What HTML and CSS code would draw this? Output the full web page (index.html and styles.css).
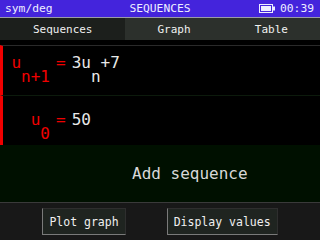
FILE: index.html
```html
<!DOCTYPE html>
<html>
<head>
<meta charset="utf-8">
<link rel="stylesheet" href="styles.css">
</head>
<body>
<div class="screen">
  <div class="status">
    <span class="mode">sym/deg</span>
    <span class="title">SEQUENCES</span>
    <span class="right">
      <svg class="battery" width="16" height="9" viewBox="0 0 16 9">
        <rect x="0.5" y="0.5" width="13" height="8" fill="none" stroke="#eeeeff" stroke-width="1"/>
        <rect x="2" y="2" width="10" height="5" fill="#eeeeff"/>
        <rect x="14" y="2.5" width="2" height="4" fill="#eeeeff"/>
      </svg>
      <span class="time">00:39</span>
    </span>
  </div>
  <div class="tabs">
    <div class="tab active">Sequences</div>
    <div class="tab">Graph</div>
    <div class="tab">Table</div>
  </div>
  <div class="list">
    <div class="row first">
      <div class="lhs red">u<span class="sub">n+1</span></div>
      <div class="eq red">=</div>
      <div class="rhs">3u<span class="sub">n</span>+7</div>
    </div>
    <div class="row second">
      <div class="lhs red">u<span class="sub">0</span></div>
      <div class="eq red">=</div>
      <div class="rhs">50</div>
    </div>
  </div>
  <div class="add">Add sequence</div>
  <div class="bottom">
    <div class="btn">Plot graph</div>
    <div class="btn">Display values</div>
  </div>
</div>
</body>
</html>
```

FILE: styles.css
```css
* { box-sizing: border-box; margin: 0; padding: 0; }
html, body { width: 320px; height: 240px; overflow: hidden; background: #000; }
body { font-family: "DejaVu Sans Mono", "Liberation Mono", monospace; }
.screen { width: 320px; height: 240px; display: flex; flex-direction: column; background: #000; }

.status {
  height: 18px;
  background: #4424dc;
  border-bottom: 1px solid #9a9aa8;
  color: #eeeeff;
  font-size: 11.3px;
  display: flex;
  align-items: center;
  padding: 0 6px 1px 5px;
  position: relative;
}
.status .mode { flex: 1; }
.status .title { position: absolute; left: 0; right: 0; text-align: center; }
.status .right { display: flex; align-items: center; gap: 5px; position: relative; }
.battery { display: block; }

.tabs { height: 22px; display: flex; font-size: 11px; color: #f0f0f0; }
.tab { display: flex; align-items: center; justify-content: center; background: #2c302c; flex: 97 0 0; }
.tab.active { background: #1c1f1c; flex: 125 0 0; }

.list { padding-top: 5px; }
.list .row {
  height: 50px;
  border-left: 3px solid #f00000;
  display: flex;
  align-items: flex-start;
  font-size: 16px;
  line-height: 20px;
  color: #e8e8e8;
}
.row.first { border-top: 1px solid #2a2a2a; border-bottom: 1px solid #0c1a0c; height: 51px; padding-top: 7px; }
.row.second { height: 49px; padding-top: 14px; }
.red { color: #f00000; }
.lhs { width: 47px; text-align: right; white-space: nowrap; }
.eq { margin-left: 6px; }
.rhs { margin-left: 6px; white-space: nowrap; }
.sub { vertical-align: -14px; }

.add {
  height: 58px;
  background: #001000;
  border-bottom: 1px solid #3a3a3a;
  color: #d8d8d8;
  font-size: 16px;
  display: flex;
  align-items: center;
  padding-left: 132px;
}

.bottom {
  flex: 1;
  background: #181818;
  display: flex;
  justify-content: center;
  gap: 41px;
  padding-top: 5px;
}
.btn {
  height: 27px;
  background: #1f2420;
  border-left: 1px solid #7a7a7a;
  border-bottom: 1px solid #7a7a7a;
  border-top: 1px solid #2e2e2e;
  border-right: 1px solid #2e2e2e;
  color: #f0f0f0;
  font-size: 11.5px;
  display: flex;
  align-items: center;
  padding: 0 6px;
}
```
